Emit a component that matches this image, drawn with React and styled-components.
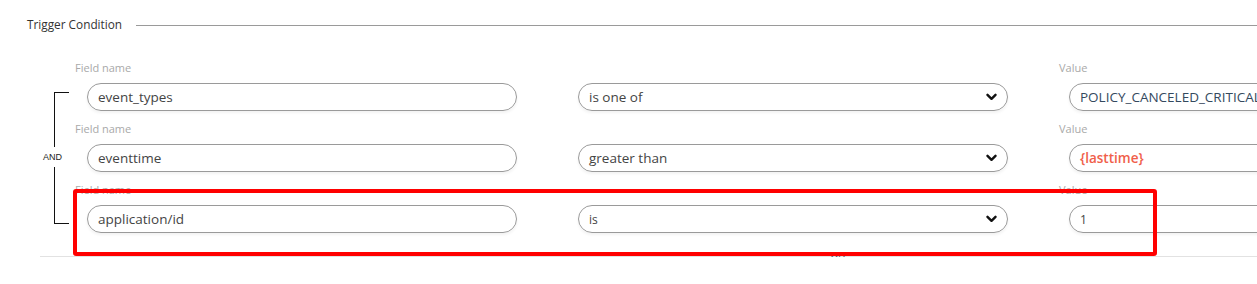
import React from "react";
import styled, { createGlobalStyle } from "styled-components";

const GlobalStyle = createGlobalStyle`
  html, body {
    margin: 0;
    padding: 0;
    background: #fff;
    overflow: hidden;
  }
  body {
    font-family: "Open Sans", "DejaVu Sans", sans-serif;
  }
`;

const Page = styled.div`
  position: relative;
  width: 1700px;
  padding-top: 17px;
`;

const Header = styled.div`
  display: flex;
  align-items: center;
  gap: 14px;
  padding-left: 27px;
  height: 14px;
  font-size: 11.8px;
  color: #333;
`;

const HeaderLine = styled.div`
  flex: 1;
  height: 1px;
  background: #9a9a9a;
  margin-top: 3px;
`;

const Group = styled.div`
  display: flex;
  margin: 30px 0 0 43px;
`;

const Bracket = styled.div`
  width: 32px;
  display: flex;
  flex-direction: column;
  padding-top: 31px;
`;

const Arm = styled.div`
  margin-left: 11px;
  width: 14px;
  height: ${(p) => p.$h}px;
  border-left: 1px solid #111;
  border-${(p) => p.$side}: 1px solid #111;
`;

const AndLabel = styled.div`
  height: 20px;
  display: flex;
  align-items: center;
  font-family: "Liberation Sans", Arial, sans-serif;
  font-size: 9px;
  color: #222;
`;

const Rows = styled.div`
  display: flex;
  flex-direction: column;
  gap: 11px;
`;

const Row = styled.div`
  display: flex;
  gap: 49px;
`;

const Field = styled.div`
  width: 442px;
  display: flex;
  flex-direction: column;
  gap: 8px;
`;

const Label = styled.div`
  height: 14px;
  line-height: 14px;
  font-size: 11px;
  color: #a9a9a9;
  padding-left: ${(p) => p.$pad || 0}px;
  visibility: ${(p) => (p.$hidden ? "hidden" : "visible")};
`;

const InputBox = styled.div`
  margin-left: 12px;
  width: 430px;
  height: 28px;
  box-sizing: border-box;
  border: 1px solid #9a9a9a;
  border-radius: 14px;
  box-shadow: 0 2px 3px rgba(0, 0, 0, 0.05);
  display: flex;
  align-items: center;
  justify-content: space-between;
  padding: 0 10px;
  font-size: ${(p) => (p.$small ? 12 : 13.5)}px;
  font-weight: ${(p) => (p.$bold ? 600 : 400)};
  color: ${(p) => p.$color || "#444"};
  white-space: nowrap;
  overflow: hidden;
`;

const Chevron = () => (
  <svg width="11" height="8" viewBox="0 0 11 8">
    <path d="M1.5 1.8 L5.5 5.8 L9.5 1.8" fill="none" stroke="#111" strokeWidth="2.4" strokeLinecap="round" strokeLinejoin="round" />
  </svg>
);

const Divider = styled.div`
  position: relative;
  margin: 23px 0 0 40px;
  height: 1px;
  width: 1596px;
  background: #e2e2e2;
`;

const OrLabel = styled.span`
  position: absolute;
  left: 50%;
  top: -1px;
  transform: translateX(-50%);
  font-family: "Liberation Sans", Arial, sans-serif;
  font-size: 10px;
  line-height: 10px;
  color: #4a5566;
`;

const Highlight = styled.div`
  position: absolute;
  left: 73px;
  top: 189px;
  width: 1084px;
  height: 67px;
  box-sizing: border-box;
  border: 4px solid #ff0000;
  border-radius: 3px;
  pointer-events: none;
`;

const conditions = [
  { field: "event_types", op: "is one of", value: "POLICY_CANCELED_CRITICAL", valueColor: "#34495e" },
  { field: "eventtime", op: "greater than", value: "{lasttime}", valueColor: "#f0604a", bold: true },
  { field: "application/id", op: "is", value: "1", small: true },
];

export default function App() {
  return (
    <>
      <GlobalStyle />
      <Page>
        <Header>
          <span>Trigger Condition</span>
          <HeaderLine />
        </Header>
        <Group>
          <Bracket>
            <Arm $h={54} $side="top" />
            <AndLabel>AND</AndLabel>
            <Arm $h={56} $side="bottom" />
          </Bracket>
          <Rows>
            {conditions.map((c) => (
              <Row key={c.field}>
                <Field>
                  <Label>Field name</Label>
                  <InputBox>{c.field}</InputBox>
                </Field>
                <Field>
                  <Label $hidden>Operator</Label>
                  <InputBox $small={c.small}>
                    <span>{c.op}</span>
                    <Chevron />
                  </InputBox>
                </Field>
                <Field>
                  <Label $pad={2}>Value</Label>
                  <InputBox $color={c.valueColor} $bold={c.bold} $small={c.small}>
                    {c.value}
                  </InputBox>
                </Field>
              </Row>
            ))}
          </Rows>
        </Group>
        <Divider>
          <OrLabel>OR</OrLabel>
        </Divider>
        <Highlight />
      </Page>
    </>
  );
}
